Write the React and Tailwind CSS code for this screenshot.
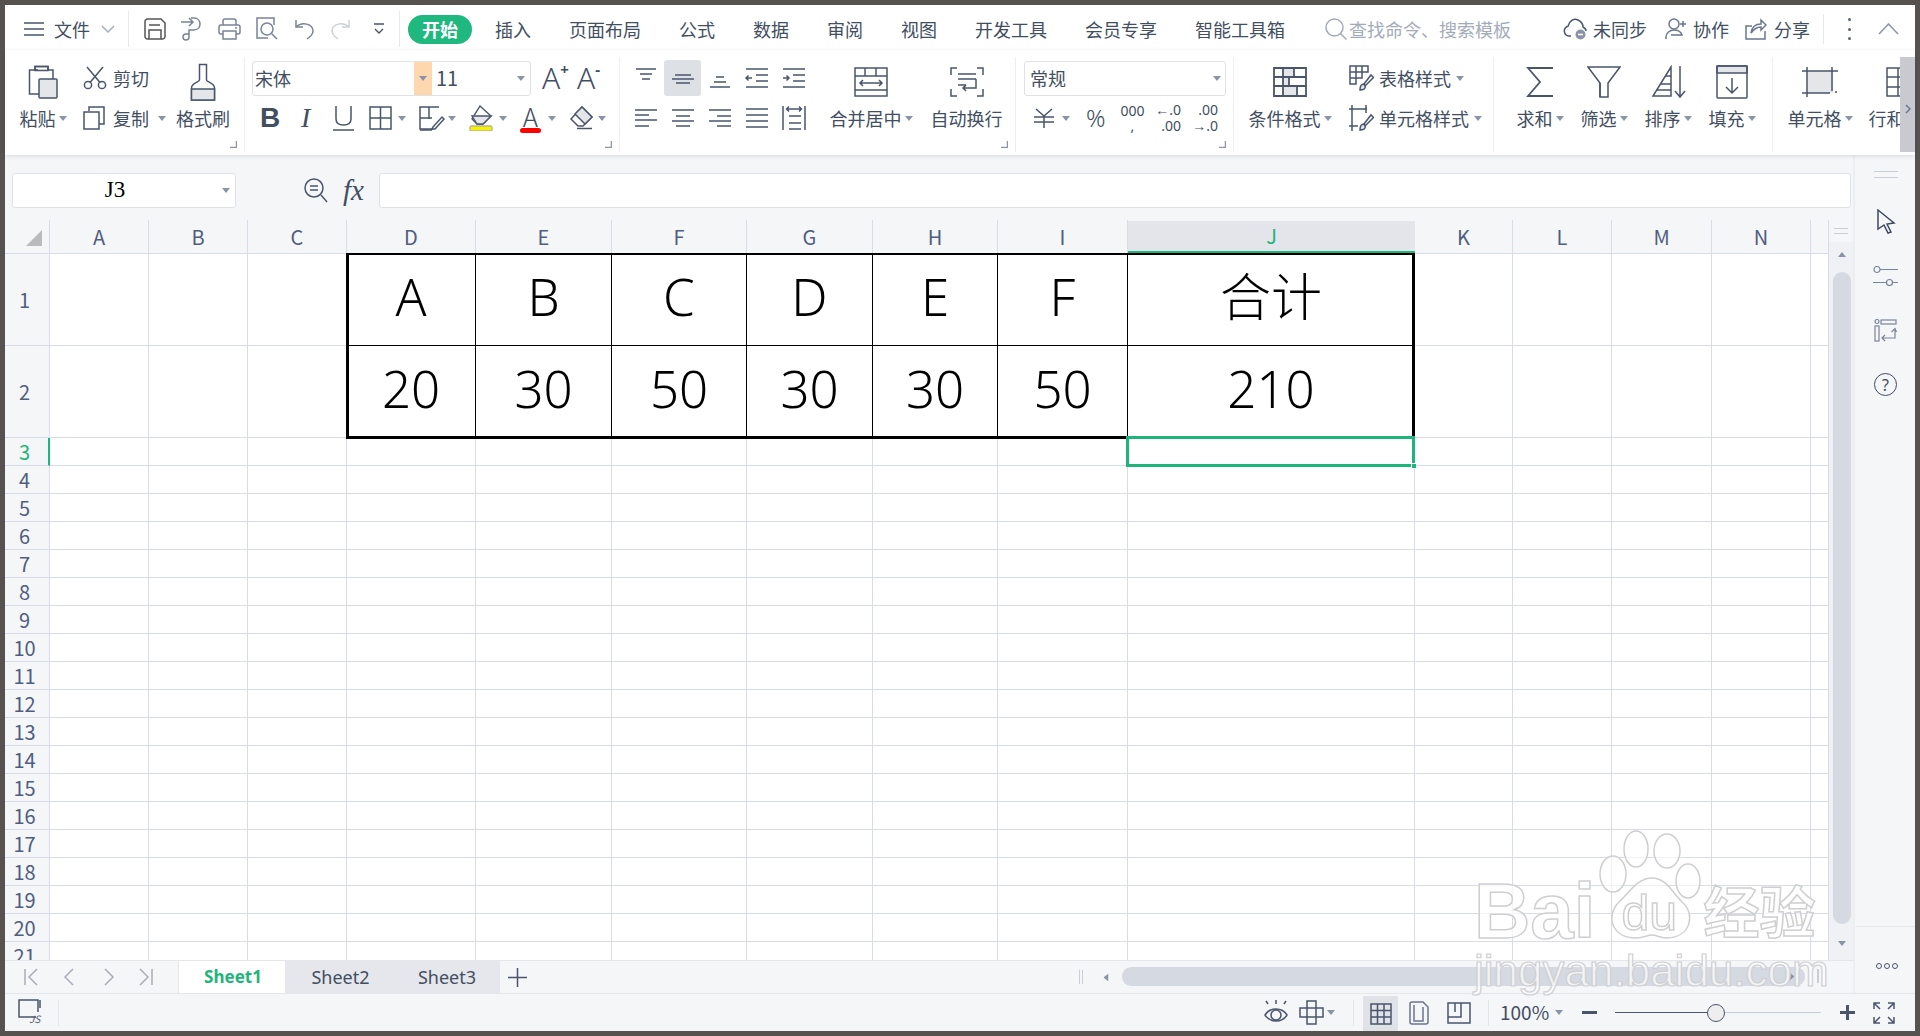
import React from "react";

const FONT = "font-['Noto_Sans_CJK_SC','Noto_Sans',sans-serif]";

const Ico = ({ w, h, className = "stroke-[#4a556c]", sw = 1.5, children }) => (
  <svg width={w} height={h} viewBox={`0 0 ${w} ${h}`} fill="none" strokeWidth={sw} className={`shrink-0 ${className}`}>
    {children}
  </svg>
);

const Caret = ({ className = "" }) => (
  <svg width="8" height="5" viewBox="0 0 8 5" className={`shrink-0 fill-[#8a93a8] ${className}`}>
    <path d="M0 0h8L4 5z" />
  </svg>
);

const Corner = () => (
  <svg width="7" height="7" viewBox="0 0 7 7" className="fill-none stroke-[#8d95a6]">
    <path d="M6.5 0v6.5H0" strokeWidth="1.5" />
  </svg>
);

// one block of the ribbon, with the little launcher mark at its foot
const Group = ({ className, corner, children }) => (
  <div className={`flex h-[95px] shrink-0 flex-col border-r border-[#eceef1] pt-[3px] ${className}`}>
    <div className="flex h-[76px]">{children}</div>
    {corner && (
      <div className="flex h-[16px] items-end justify-end pb-[4px] pr-[7px]">
        <Corner />
      </div>
    )}
  </div>
);

const BigTool = ({ icon, label, caret, className }) => (
  <div className={`flex shrink-0 flex-col items-center ${className}`}>
    <div className="flex h-[40px] items-center justify-center pt-[3px]">{icon}</div>
    <div className="flex h-[36px] items-center gap-[3px] whitespace-nowrap">
      <span>{label}</span>
      {caret && <Caret />}
    </div>
  </div>
);

const IconPaste = () => (
  <Ico w={32} h={36}>
    <path d="M11 6H2.5v24H12" />
    <path d="M8 6V2.5h13V6h5v9" />
    <path d="M8 2.5h13v4H8z" />
    <rect x="12" y="15" width="18" height="19" rx="1" className="fill-[#e4e6ea]" />
  </Ico>
);
const IconCut = () => (
  <Ico w={24} h={24}>
    <circle cx="5" cy="19" r="3.6" />
    <circle cx="19" cy="19" r="3.6" />
    <path d="M7 16.5 20 1M17 16.5 4 1" />
  </Ico>
);
const IconCopy = () => (
  <Ico w={22} h={24}>
    <path d="M6 5V1h15v17h-5" />
    <path d="M1 6h15v17H1z" />
  </Ico>
);
const IconBrush = () => (
  <Ico w={30} h={38}>
    <path d="M11.500 17V1.500h7V17c0 2 8 3 8 8v12h-23V25c0-5 8-6 8-8z" />
    <path d="M3.500 26h23v11h-23z" className="fill-[#e4e6ea]" />
  </Ico>
);
const IconBorders = () => (
  <Ico w={23} h={24}>
    <path d="M1 1h21v22H1zM11.500 1v22M1 12h21" />
  </Ico>
);
const IconCellFill = () => (
  <Ico w={26} h={25}>
    <path d="M20 1H1v22h13M1 12h12M10 1v12" />
    <path d="m14 21 9-10 2 2-9 10h-3z" />
    <path d="M1 24h12" />
  </Ico>
);
const IconPaint = () => (
  <Ico w={24} h={26} sw={1.4}>
    <path d="m11 1 11 10-8 8H8L3 14z" />
    <path d="M3 11h15l4 0-8 8H8z" className="fill-[#e4e6ea]" />
    <rect x="1" y="21" width="22" height="5" rx="1.5" className="fill-[#f7f000] stroke-[#b9b989]" />
  </Ico>
);
const IconEraser = () => (
  <Ico w={24} h={24}>
    <path d="m13 1 10 10-9 9H9l-7-7z" />
    <path d="m13 1 10 10-7 7L6 8z" className="fill-[#e4e6ea]" />
    <path d="M8 22.500h15" />
  </Ico>
);

// the five alignment marks share one set of three-line drawings
const Lines = ({ rows }) => (
  <Ico w={24} h={24}>
    {rows.map((d, i) => (
      <path key={i} d={d} />
    ))}
  </Ico>
);
const IconIndent = ({ flip }) => (
  <Ico w={24} h={22}>
    <path d="M1 2h22M1 20h22M11 8h12M11 14h12" />
    {flip ? <path d="M7 11H1m2.500-2.500L1 11l2.500 2.500" /> : <path d="M1 11h6M4.500 8.500 7 11l-2.500 2.500" />}
  </Ico>
);
const IconDistribute = () => (
  <Ico w={24} h={26}>
    <path d="M1 1v24M23 1v24M7 11h12M7 18h12M7 24h12" />
    <path d="M5 4h14M7 1.500 4.500 4 7 6.500M17 1.500 19.500 4 17 6.500" />
  </Ico>
);
const IconMerge = () => (
  <Ico w={34} h={30}>
    <rect x="1" y="1" width="32" height="28" />
    <path d="M1 9h32M1 23h32M11 1v8M22 1v8" />
    <path d="M6 16h22M9 13l-3 3 3 3M25 13l3 3-3 3" />
  </Ico>
);
const IconWrap = () => (
  <Ico w={34} h={30}>
    <path d="M7 1H1v7M27 1h6v7M7 29H1v-7M27 29h6v-7" />
    <path d="M8 7h18M8 12h18M8 18h8" />
    <path d="M26 12v9H13m3-3-3 3 3 3" />
  </Ico>
);
const IconCondFormat = () => (
  <Ico w={34} h={30} sw={1.8}>
    <rect x="10" y="1" width="11" height="9" className="fill-[#e4e6ea] stroke-none" />
    <rect x="10" y="10" width="6" height="9" className="fill-[#e4e6ea] stroke-none" />
    <rect x="10" y="19" width="14" height="10" className="fill-[#e4e6ea] stroke-none" />
    <path d="M1 1h32v28H1zM1 10h32M1 19h32M10 1v28M21 1v9M16 10v9M24 19v10" />
  </Ico>
);
const IconBrushTip = () => (
  <>
    <path d="m15 19 7-9 2.500 2.500L16 21z" />
    <path d="M15 19c-3 0-4 3-4 6 3 0 6-1 5-4z" className="fill-[#e4e6ea]" />
  </>
);
const IconTableStyle = () => (
  <Ico w={25} h={27}>
    <path d="M1 1h18v6H13v6H7v6H1zM1 7h12M1 13h6M7 1v12M13 1v6" />
    <IconBrushTip />
  </Ico>
);
const IconCellStyle = () => (
  <Ico w={25} h={27}>
    <path d="M0 4h18M3 0v26M17 0v8M0 21h9" />
    <IconBrushTip />
  </Ico>
);
const IconSum = () => (
  <Ico w={28} h={30} sw={1.8}>
    <path d="M27 1H2l12 14L2 29h25" />
  </Ico>
);
const IconFilter = () => (
  <Ico w={34} h={32}>
    <path d="M1 1h32L21 17v14h-8V17z" />
    <path d="M13 17V31" />
  </Ico>
);
const IconSortArrow = () => (
  <Ico w={35} h={34}>
    <path d="M20 2 2 31h18z" />
    <path d="M10 19h10M14 11h6M6 25h14" />
    <path d="M29 1v31m-5-6 5 6 5-6" />
  </Ico>
);
const IconFillDown = () => (
  <Ico w={32} h={34}>
    <rect x="1" y="1" width="30" height="7" className="fill-[#e4e6ea]" />
    <rect x="1" y="1" width="30" height="32" rx="1" />
    <path d="M16 13v15m-6-6 6 6 6-6" />
  </Ico>
);
const IconCell = () => (
  <Ico w={36} h={30}>
    <rect x="5" y="4" width="26" height="22" className="fill-[#e4e6ea] stroke-none" />
    <path d="M0 4h36M0 26h28M5 0v30M30 0v24" />
    <path d="M34 24v2" />
  </Ico>
);
const IconRowCol = () => (
  <Ico w={30} h={30}>
    <path d="M1 1h28v28H1zM1 10h28M1 20h28M12 1v28" />
  </Ico>
);

const Tab = ({ children }) => <span className="whitespace-nowrap">{children}</span>;

const ALIGN_ICONS = [
  ["M2 3h20M6 8h12M8 13h8"],
  ["M4 9h16M1 13h22M5 17h14"],
  ["M8 11h8M6 16h12M2 21h20"],
  null,
  null,
  ["M1 4h22M1 9h14M1 14h22M1 20h14"],
  ["M1 4h22M5 10h14M1 15h22M5 20h14"],
  ["M1 4h22M9 10h14M1 15h22M9 20h14"],
  ["M1 3h22M1 9h22M1 15h22M1 21h22"],
  null,
];

const COLS = ["", "A", "B", "C", "D", "E", "F", "G", "H", "I", "J", "K", "L", "M", "N", ""];
const ROW_COUNT = 21;
const TABLE = {
  1: ["A", "B", "C", "D", "E", "F", "合计"],
  2: ["20", "30", "50", "30", "30", "50", "210"],
};

const SheetGrid = () => {
  const cells = [];
  COLS.forEach((c, i) => {
    if (i === 0) {
      cells.push(
        <div key="corner" className="flex items-end justify-end border-r border-b border-[#d8dce9] pb-[7px] pr-[7px]">
          <svg width="16" height="16" viewBox="0 0 16 16" className="fill-[#b9bbbd]">
            <path d="M16 0v16H0z" />
          </svg>
        </div>
      );
    } else if (c === "J") {
      cells.push(
        <div key={c} className="mt-px flex items-center justify-center border-b-[3px] border-[#1db57b] bg-[#e3e5ea] text-[#1db57b]">
          {c}
        </div>
      );
    } else {
      cells.push(
        <div key={`h${i}`} className="flex items-center justify-center border-r border-b border-[#d8dce9] text-[#4f5e80]">
          {c}
        </div>
      );
    }
  });
  for (let r = 1; r <= ROW_COUNT; r++) {
    cells.push(
      <div
        key={`r${r}`}
        className={
          r === 3
            ? "flex items-center justify-center border-r-[2px] border-b border-r-[#1db57b] border-b-[#d8dce9] pr-[4px] text-[#1db57b]"
            : "flex items-center justify-center border-r border-b border-[#d8dce9] pr-[5px] text-[#4f5e80]"
        }
      >
        {r}
      </div>
    );
    for (let i = 1; i < COLS.length; i++) {
      const val = TABLE[r] && i >= 4 && i <= 10 ? TABLE[r][i - 4] : null;
      cells.push(
        <div
          key={`${r}-${i}`}
          className={
            val
              ? "flex items-center justify-center border-r border-b border-black bg-white pb-[6px] font-['Noto_Sans','Noto_Sans_CJK_SC',sans-serif] text-[51px] font-light text-black"
              : "border-r border-b border-[#d8dce9] bg-white"
          }
        >
          {val}
        </div>
      );
    }
  }
  return (
    <div className="relative h-[740px] w-[1824px] overflow-hidden">
      <div className="grid grid-cols-[45px_99px_99px_99px_129px_136px_135px_126px_125px_130px_287px_98px_99px_100px_99px_18px] grid-rows-[34px_92px_92px_repeat(19,28px)] text-[20px]">
        {cells}
      </div>
      <div className="pointer-events-none absolute left-[341px] top-[33px] h-[186px] w-[1069px] border-[3px] border-t-2 border-black" />
      <div className="pointer-events-none absolute left-[1121px] top-[216px] h-[31px] w-[289px] border-[3px] border-[#1db57b]" />
      <div className="absolute left-[1406px] top-[243px] h-[6px] w-[6px] border border-white bg-[#1db57b]" />
    </div>
  );
};

const Watermark = () => (
  <div className="pointer-events-none absolute left-[1474px] top-[830px] h-[170px] w-[350px] font-['Liberation_Sans',sans-serif]">
    <div className="flex h-[110px] items-end">
      <span className="-mb-[10px] text-[78px] font-bold leading-[78px] text-white/70 [-webkit-text-stroke:1.5px_#cfcfd1]">Bai</span>
      <div className="relative h-[112px] w-[108px] shrink-0">
        <svg width="108" height="114" viewBox="0 0 108 114" className="fill-white/60 stroke-[#cfcfd1]" strokeWidth="1.5">
          <ellipse cx="18" cy="46" rx="13" ry="18" />
          <ellipse cx="41" cy="21" rx="12" ry="18" />
          <ellipse cx="72" cy="23" rx="13" ry="17" />
          <ellipse cx="93" cy="53" rx="12" ry="17" />
          <path d="M57 50c14 0 20 14 30 24 14 12 9 35-15 36-8 0-10-3-15-3s-8 3-16 3C17 110 10 88 24 74c10-9 18-24 33-24z" />
        </svg>
        <span className="absolute left-[26px] top-[60px] text-[50px] leading-[50px] text-white/60 [-webkit-text-stroke:1.5px_#cfcfd1]">du</span>
      </div>
      <span className={`${FONT} -mb-[4px] text-[56px] font-bold leading-[70px] text-white/70 [-webkit-text-stroke:1.5px_#cfcfd1]`}>经验</span>
    </div>
    <div className="mt-[5px] text-[44px] leading-[52px] text-white/70 [-webkit-text-stroke:1.2px_#cfcfd1]">jingyan.baidu.com</div>
  </div>
);

export default function App() {
  return (
    <div className={`relative h-[1036px] w-[1920px] overflow-hidden bg-[#555250] px-[5px] pt-[5px] text-[18px] text-[#424e61] ${FONT}`}>
      <div className="flex h-[1026px] flex-col bg-[#f5f6f8]">
        {/* title row */}
        <div className="flex h-[45px] shrink-0 items-center bg-white pt-[3px]">
          <Ico w={20} h={16} className="ml-[19px] stroke-[#4a556c]">
            <path d="M0 2h20M0 8h20M0 14h20" />
          </Ico>
          <span className="ml-[10px]">文件</span>
          <Ico w={14} h={8} className="ml-[11px] stroke-[#a6adbb]">
            <path d="m1 1 6 6 6-6" />
          </Ico>
          <div className="ml-[13px] h-[36px] w-px bg-[#e6e8ec]" />
          <Ico w={22} h={22} className="ml-[15px] stroke-[#555]">
            <path d="M1 3.500A2.500 2.500 0 0 1 3.500 1H17l4 4v13.500a2.500 2.500 0 0 1-2.500 2.500h-15A2.500 2.500 0 0 1 1 18.500z" />
            <path d="M5 21v-9h12v9M5 7h11" />
          </Ico>
          <Ico w={22} h={26} className="ml-[15px] stroke-[#7a8499]">
            <path d="M0 6h11M8 2l4 4-4 4" />
            <path d="M10 2h3c8 0 8 12 0 12H8v7a3 3 0 1 1-3-3h3" />
          </Ico>
          <Ico w={23} h={22} className="ml-[15px] stroke-[#7a8499]">
            <path d="M5 7V3a2 2 0 0 1 2-2h9a2 2 0 0 1 2 2v4" />
            <path d="M5 16H3a2 2 0 0 1-2-2V9a2 2 0 0 1 2-2h17a2 2 0 0 1 2 2v5a2 2 0 0 1-2 2h-2" />
            <path d="M5 13h13v8H5zM17 10h2" />
          </Ico>
          <Ico w={24} h={24} className="ml-[15px] stroke-[#7a8499]">
            <path d="M12 21H1V1h17v7" />
            <circle cx="11" cy="12" r="6" />
            <path d="m15.500 16.500 5.500 5.500" />
          </Ico>
          <Ico w={20} h={22} className="ml-[15px] stroke-[#7a8499]">
            <path d="M1 2v7h7" />
            <path d="M1 9c6-6 17-3 17 4 0 4-3 6-6 8" />
          </Ico>
          <Ico w={20} h={22} className="ml-[15px] stroke-[#cdd1d8]">
            <path d="M19 2v7h-7" />
            <path d="M19 9C13 3 2 6 2 13c0 4 3 6 6 8" />
          </Ico>
          <Ico w={12} h={12} sw={1.4} className="ml-[23px] stroke-[#4a556c]">
            <path d="M1 1h10M2 6l4 4 4-4" />
          </Ico>
          <div className="ml-[14px] h-[36px] w-px bg-[#e6e8ec]" />
          <div className="ml-[8px] flex h-[29px] w-[64px] items-center justify-center rounded-full bg-[#1fb97f] font-bold text-white">开始</div>
          <div className="ml-[23px] flex gap-[38px]">
            <Tab>插入</Tab>
            <Tab>页面布局</Tab>
            <Tab>公式</Tab>
            <Tab>数据</Tab>
            <Tab>审阅</Tab>
            <Tab>视图</Tab>
            <Tab>开发工具</Tab>
            <Tab>会员专享</Tab>
            <Tab>智能工具箱</Tab>
          </div>
          <Ico w={22} h={22} className="ml-[40px] stroke-[#a3abba]">
            <circle cx="9.500" cy="9.500" r="8.500" />
            <path d="m15.500 15.500 6 6" />
          </Ico>
          <span className="ml-[2px] whitespace-nowrap text-[#a3abba]">查找命令、搜索模板</span>
          <Ico w={25} h={22} className="ml-[52px] stroke-[#4a556c]">
            <path d="M8 18H6a5 5 0 0 1-1-9.800C6 3 11 0 15 2c3 1.500 5 4 5 7 2 1 3 3 3 4" />
            <circle cx="17.500" cy="16.500" r="5" className="fill-[#8a93a8] stroke-none" />
            <path d="M15 16.500h5" className="stroke-white" />
          </Ico>
          <span className="ml-[5px] whitespace-nowrap">未同步</span>
          <Ico w={21} h={22} className="ml-[18px] stroke-[#6b7690]">
            <circle cx="9" cy="6" r="5" />
            <path d="M1 21v-2c0-4 4-7 8-7s7 2 8 5H6M15 6h6M18 3v6" />
          </Ico>
          <span className="ml-[7px] whitespace-nowrap">协作</span>
          <Ico w={23} h={22} className="ml-[15px] stroke-[#6b7690]">
            <path d="M8 8H2v13h19v-8" />
            <path d="M7 15c1-6 5-9 10-9V2l5 5-5 5V9c-4 0-7 2-10 6z" className="stroke-[#6b7690]" />
          </Ico>
          <span className="ml-[7px] whitespace-nowrap">分享</span>
          <div className="ml-[13px] h-[30px] w-px bg-[#e6e8ec]" />
          <div className="ml-[24px] flex h-[22px] flex-col justify-between">
            <div className="h-[3px] w-[3px] rounded-full bg-[#5a6478]" />
            <div className="h-[3px] w-[3px] rounded-full bg-[#5a6478]" />
            <div className="h-[3px] w-[3px] rounded-full bg-[#5a6478]" />
          </div>
          <Ico w={21} h={12} className="ml-[27px] stroke-[#8a93a8]">
            <path d="m1 11 9.500-10L20 11" />
          </Ico>
        </div>

        {/* ribbon */}
        <div className="relative z-10 flex h-[105px] shrink-0 bg-white pt-[7px] shadow-[0_1px_4px_rgba(0,0,0,0.12)]">
          <Group className="w-[240px]" corner>
            <BigTool className="ml-[9px] w-[58px]" icon={<IconPaste />} label="粘贴" caret />
            <div className="ml-[11px] flex w-[90px] shrink-0 flex-col gap-[4px]">
              <div className="flex h-[36px] items-center gap-[6px] whitespace-nowrap">
                <IconCut />
                <span>剪切</span>
              </div>
              <div className="flex h-[36px] items-center gap-[8px] whitespace-nowrap">
                <IconCopy />
                <span>复制</span>
                <Caret className="ml-[1px]" />
              </div>
            </div>
            <BigTool className="w-[60px]" icon={<IconBrush />} label="格式刷" />
          </Group>

          <Group className="w-[375px]" corner>
            <div className="flex flex-col gap-[4px]">
              <div className="ml-[7px] flex h-[36px] items-center">
                <div className="flex h-[35px] w-[279px] items-stretch overflow-hidden rounded-[3px] border border-[#e0e2e7]">
                  <div className="flex flex-1 items-center pl-[2px]">宋体</div>
                  <div className="flex w-[18px] items-center justify-center bg-[#fdd8ae]">
                    <Caret />
                  </div>
                  <div className="flex w-[98px] items-center justify-between pl-[4px] pr-[5px]">
                    <span className="text-[20px]">11</span>
                    <Caret />
                  </div>
                </div>
                <div className="ml-[11px] flex w-[22px] items-start font-['Noto_Sans',sans-serif] text-[30px] font-light leading-[32px]">
                  A<span className="text-[15px] font-bold leading-[15px]">+</span>
                </div>
                <div className="ml-[13px] flex w-[24px] items-start font-['Noto_Sans',sans-serif] text-[30px] font-light leading-[32px]">
                  A<span className="text-[15px] font-bold leading-[15px]">-</span>
                </div>
              </div>
              <div className="flex h-[36px] items-center">
                <span className="ml-[15px] w-[19px] font-['Liberation_Sans',sans-serif] text-[28px] font-bold leading-none">B</span>
                <span className="ml-[22px] w-[12px] font-['Liberation_Serif',serif] text-[28px] italic leading-none">I</span>
                <span className="ml-[20px] w-[21px]">
                  <Ico w={21} h={26}>
                    <path d="M3 1v13c0 4 3 6 7.500 6S18 18 18 14V1M0 25h21" />
                  </Ico>
                </span>
                <div className="ml-[15px]"><IconBorders /></div>
                <Caret className="ml-[6px]" />
                <div className="ml-[13px]"><IconCellFill /></div>
                <Caret className="ml-[3px]" />
                <div className="ml-[13px]"><IconPaint /></div>
                <Caret className="ml-[6px]" />
                <div className="ml-[13px] flex w-[21px] flex-col items-center text-[26px] font-light leading-[24px]">
                  A
                  <div className="h-[5px] w-[21px] rounded-full bg-[#ff0000]" />
                </div>
                <Caret className="ml-[7px]" />
                <div className="ml-[13px]"><IconEraser /></div>
                <Caret className="ml-[5px]" />
              </div>
            </div>
          </Group>

          <Group className="w-[396px]" corner>
            <div className="ml-[7px] grid w-[185px] shrink-0 grid-cols-[repeat(5,37px)] grid-rows-[36px_36px] gap-y-[4px]">
              {ALIGN_ICONS.map((rows, i) => (
                <div key={i} className={`flex items-center justify-center ${i === 1 ? "rounded-[3px] bg-[#dde0e5]" : ""}`}>
                  {rows && <Lines rows={rows} />}
                  {i === 3 && <IconIndent flip />}
                  {i === 4 && <IconIndent />}
                  {i === 9 && <IconDistribute />}
                </div>
              ))}
            </div>
            <BigTool className="ml-[8px] w-[102px]" icon={<IconMerge />} label="合并居中" caret />
            <BigTool className="w-[89px]" icon={<IconWrap />} label="自动换行" />
          </Group>

          <Group className="w-[218px]" corner>
            <div className="flex flex-col gap-[4px]">
              <div className="ml-[8px] flex h-[36px] items-center">
                <div className="flex h-[35px] w-[202px] items-center justify-between rounded-[3px] border border-[#e0e2e7] pl-[5px] pr-[4px]">
                  <span>常规</span>
                  <Caret />
                </div>
              </div>
              <div className="flex h-[36px] items-center">
                <Ico w={20} h={20} className="ml-[18px] stroke-[#4a556c]">
                  <path d="m2 1 8 7 8-7M0 9h20M0 14h20M10 8v12" />
                </Ico>
                <Caret className="ml-[8px]" />
                <span className="ml-[16px] w-[18px] font-['Noto_Sans',sans-serif] text-[24px] font-light leading-none">%</span>
                <div className="ml-[16px] flex h-[30px] w-[25px] flex-col items-center justify-between font-['Noto_Sans',sans-serif] text-[14px] leading-[15px]">
                  <span>000</span>
                  <span>,</span>
                </div>
                <div className="ml-[11px] flex h-[32px] w-[25px] flex-col items-end justify-between whitespace-nowrap font-['Noto_Sans',sans-serif] text-[14px] leading-[16px]">
                  <span>←.0</span>
                  <span>.00</span>
                </div>
                <div className="ml-[13px] flex h-[32px] w-[24px] flex-col items-end justify-between whitespace-nowrap font-['Noto_Sans',sans-serif] text-[14px] leading-[16px]">
                  <span>.00</span>
                  <span>→.0</span>
                </div>
              </div>
            </div>
          </Group>

          <Group className="w-[260px]">
            <BigTool className="ml-[6px] w-[100px]" icon={<IconCondFormat />} label="条件格式" caret />
            <div className="ml-[9px] flex shrink-0 flex-col gap-[4px]">
              <div className="flex h-[36px] items-center gap-[5px] whitespace-nowrap">
                <IconTableStyle />
                <span>表格样式</span>
                <Caret />
              </div>
              <div className="flex h-[36px] items-center gap-[5px] whitespace-nowrap">
                <IconCellStyle />
                <span>单元格样式</span>
                <Caret />
              </div>
            </div>
          </Group>

          <Group className="w-[279px]">
            <BigTool className="ml-[14px] w-[64px]" icon={<IconSum />} label="求和" caret />
            <BigTool className="w-[64px]" icon={<IconFilter />} label="筛选" caret />
            <BigTool className="w-[64px]" icon={<IconSortArrow />} label="排序" caret />
            <BigTool className="w-[64px]" icon={<IconFillDown />} label="填充" caret />
          </Group>

          <div className="flex h-[95px] w-[127px] shrink-0 overflow-hidden pt-[3px]">
            <BigTool className="ml-[6px] w-[82px]" icon={<IconCell />} label="单元格" caret />
            <BigTool className="w-[80px]" icon={<IconRowCol />} label="行和列" caret />
          </div>
          <div className="flex h-[95px] w-[15px] shrink-0 items-center justify-center bg-[#c8cad0] pt-[8px]">
            <Ico w={6} h={10} className="stroke-[#6b7690]">
              <path d="m1 1 4 4-4 4" />
            </Ico>
          </div>
        </div>

        {/* sheet and side panel */}
        <div className="flex h-[838px] shrink-0">
          <div className="flex w-[1848px] shrink-0 flex-col">
            <div className="flex h-[65px] shrink-0 items-start pt-[18px]">
              <div className="relative ml-[7px] flex h-[35px] w-[224px] items-center justify-center rounded-[3px] border border-[#dfe2e8] bg-white pr-[18px] font-['Liberation_Serif',serif] text-[23px] text-black">
                J3
                <Caret className="absolute right-[5px] top-[14px]" />
              </div>
              <Ico w={24} h={25} className="ml-[68px] mt-[5px] stroke-[#4a556c]">
                <circle cx="10" cy="10" r="9" />
                <path d="m17 17 6 7M6 8h8M6 12h8" />
              </Ico>
              <span className="ml-[15px] mt-[2px] font-['Liberation_Serif',serif] text-[29px] italic leading-[30px]">fx</span>
              <div className="ml-[15px] mr-[2px] h-[35px] flex-1 rounded-[3px] border border-[#dfe2e8] bg-white" />
            </div>
            <div className="flex h-[740px] shrink-0">
              <SheetGrid />
              <div className="flex w-[24px] shrink-0 flex-col">
                <div className="flex h-[22px] shrink-0 items-center justify-center">
                  <div className="h-[6px] w-[14px] border-y border-[#c9cdd6]" />
                </div>
                <div className="flex h-[30px] shrink-0 items-start justify-center bg-[#eff1f4] pl-[2px] pt-[10px]">
                  <Caret className="rotate-180" />
                </div>
                <div className="flex-1 bg-[#eff1f4] pl-[4px] pr-[2px]">
                  <div className="h-full rounded-[9px] bg-[#d5d9e2]" />
                </div>
                <div className="flex h-[36px] shrink-0 items-start justify-center bg-[#eff1f4] pl-[2px] pt-[17px]">
                  <Caret />
                </div>
              </div>
            </div>
            <div className="flex h-[33px] shrink-0 items-stretch border-t border-[#e4e6ea]">
              <div className="flex w-[174px] shrink-0 items-center border-r border-[#e4e6ea] pl-[19px]">
                <Ico w={14} h={18} className="stroke-[#a8adb8]">
                  <path d="M1 1v16M13 1 5 9l8 8" />
                </Ico>
                <Ico w={12} h={18} className="ml-[25px] stroke-[#a8adb8]">
                  <path d="M10 1 2 9l8 8" />
                </Ico>
                <Ico w={12} h={18} className="ml-[28px] stroke-[#a8adb8]">
                  <path d="m2 1 8 8-8 8" />
                </Ico>
                <Ico w={14} h={18} className="ml-[24px] stroke-[#a8adb8]">
                  <path d="M13 1v16M1 1l8 8-8 8" />
                </Ico>
              </div>
              <div className="flex w-[106px] shrink-0 items-center justify-center bg-white pl-[2px] font-['Noto_Sans',sans-serif] text-[17px] font-bold text-[#1db57b]">Sheet1</div>
              <div className="flex w-[107px] shrink-0 items-center justify-center bg-[#e5e7ec] pl-[4px] font-['Noto_Sans',sans-serif] text-[18px]">Sheet2</div>
              <div className="flex w-[108px] shrink-0 items-center justify-center bg-[#e5e7ec] pl-[2px] font-['Noto_Sans',sans-serif] text-[18px]">Sheet3</div>
              <div className="ml-[8px] flex items-center">
                <Ico w={19} h={19}>
                  <path d="M0 9.500h19M9.500 0v19" />
                </Ico>
              </div>
              <div className="ml-[552px] flex items-center">
                <div className="h-[14px] w-[4px] border-x border-[#c9cdd6]" />
                <Caret className="ml-[19px] rotate-90" />
              </div>
              <div className="ml-[12px] mt-[6px] flex h-[19px] w-[683px] shrink-0 items-center justify-end rounded-[9px] bg-[#d5d9e2] pr-[9px]">
                <Caret className="-rotate-90" />
              </div>
              <div className="ml-[12px] mt-[8px] h-[14px] w-[2px] bg-[#c9cdd6]" />
            </div>
          </div>

          <div className="flex w-[62px] shrink-0 flex-col items-center border-l-[2px] border-[#eceef1] pl-[1px]">
            <div className="mt-[16px] h-[7px] w-[24px] shrink-0 border-y border-[#c9cdd6]" />
            <Ico w={19} h={25} className="ml-[2px] mt-[31px] stroke-[#3f4a63]">
              <path d="m1 1 16 13-7 1 4 8-3 1-4-8-6 4z" />
            </Ico>
            <Ico w={25} h={20} sw={1.2} className="mt-[32px] stroke-[#7a8499]">
              <circle cx="4" cy="3.500" r="3" />
              <path d="M7 3.500h18M0 16.500h13M20 16.500h5" />
              <circle cx="16.500" cy="16.500" r="3" />
            </Ico>
            <Ico w={23} h={23} sw={1.2} className="mt-[33px] stroke-[#7a8499]">
              <circle cx="3" cy="2.500" r="2" />
              <rect x="1" y="7" width="4" height="15" />
              <rect x="7" y="1" width="15" height="4" />
              <path d="M21 11v8H8m3-3-3 3 3 3M17.500 13l3.500-3.500 1.500 3.500" />
            </Ico>
            <div className="mt-[31px] flex h-[23px] w-[23px] items-center justify-center rounded-full border-[1.5px] border-[#3f4a63] font-['Noto_Sans',sans-serif] text-[16px] leading-none text-[#3f4a63]">?</div>
            <div className="mt-[530px] h-px w-full shrink-0 bg-[#e6e8ec]" />
            <div className="ml-[2px] mt-[36px] flex gap-[2px]">
              <div className="h-[6px] w-[6px] rounded-full border border-[#4a556c]" />
              <div className="h-[6px] w-[6px] rounded-full border border-[#4a556c]" />
              <div className="h-[6px] w-[6px] rounded-full border border-[#4a556c]" />
            </div>
          </div>
        </div>

        {/* status bar */}
        <div className="flex h-[38px] shrink-0 items-center border-t border-[#e4e6ea]">
          <Ico w={28} h={27} className="ml-[13px] stroke-[#4a556c]">
            <path d="M18 18H1V1h19v12M22 1v8" />
            <text x="11" y="24" fontSize="10" fontStyle="italic" strokeWidth="0" className="fill-[#4a556c]">JS</text>
          </Ico>
          <div className="ml-[12px] h-[26px] w-px bg-[#e4e6ea]" />
          <Ico w={24} h={26} className="ml-[1205px] stroke-[#4a556c]">
            <path d="M2 1l2 3M12 0v4M22 1l-2 3" />
            <path d="M1 15c5-8 17-8 22 0-5 8-17 8-22 0z" />
            <circle cx="12" cy="15" r="5" />
          </Ico>
          <Ico w={25} h={25} className="ml-[11px] stroke-[#4a556c]">
            <path d="M8 1h9v7h7v9h-7v7H8v-7H1V8h7zM8 8h9v9H8z" />
          </Ico>
          <Caret className="ml-[3px]" />
          <div className="ml-[18px] h-[26px] w-px bg-[#e4e6ea]" />
          <div className="ml-[9px] flex h-[35px] w-[35px] items-center justify-center self-end bg-[#dfe2e7]">
            <Ico w={22} h={22}>
              <path d="M1 1h20v20H1zM1 7.500h20M1 14h20M7.500 1v20M14 1v20" />
            </Ico>
          </div>
          <Ico w={20} h={24} className="ml-[11px] stroke-[#6b7690]">
            <path d="M3 1h11l5 5v15a2 2 0 0 1-2 2H3a2 2 0 0 1-2-2V3a2 2 0 0 1 2-2z" />
            <path d="M5 4v16h9V6" />
          </Ico>
          <Ico w={24} h={22} className="ml-[18px] stroke-[#4a556c]">
            <path d="M1 1h22v20H1zM1 15h13V1M8 1v9" />
          </Ico>
          <div className="ml-[17px] h-[26px] w-px bg-[#e4e6ea]" />
          <span className="ml-[11px] w-[49px] text-[19px] text-[#424e61]">100%</span>
          <Caret className="ml-[6px]" />
          <div className="ml-[19px] h-[3px] w-[15px] bg-[#4a556c]" />
          <div className="ml-[18px] flex w-[206px] items-center">
            <div className="h-px w-[92px] bg-[#4a556c]" />
            <div className="h-[18px] w-[18px] shrink-0 rounded-full border border-[#4a556c] bg-[#eeeeee]" />
            <div className="h-px flex-1 bg-[#c8ccd6]" />
          </div>
          <Ico w={15} h={15} sw={3} className="ml-[19px] stroke-[#4a556c]">
            <path d="M0 7.500h15M7.500 0v15" />
          </Ico>
          <Ico w={22} h={22} className="ml-[18px] stroke-[#4a556c]">
            <path d="M1 7V1h6M1 1l6 6M21 7V1h-6M21 1l-6 6M1 15v6h6M1 21l6-6M21 15v6h-6M21 21l-6-6" />
          </Ico>
        </div>
      </div>
      <Watermark />
    </div>
  );
}
